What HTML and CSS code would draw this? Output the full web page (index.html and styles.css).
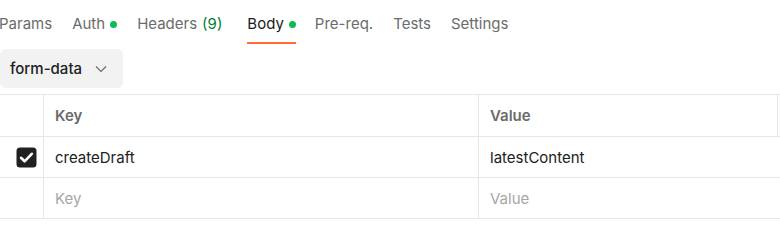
FILE: index.html
```html
<!DOCTYPE html>
<html lang="en">
<head>
    <meta charset="UTF-8">
    <title>Request Body</title>
    <link rel="stylesheet" href="styles.css">
</head>
<body>
    <div class="tabs">
        <div class="tab">Params</div>
        <div class="tab">Auth <span class="dot"></span></div>
        <div class="tab">Headers <span class="count">(9)</span></div>
        <div class="tab active">Body <span class="dot"></span></div>
        <div class="tab">Pre-req.</div>
        <div class="tab">Tests</div>
        <div class="tab">Settings</div>
    </div>

    <div class="body-type">
        <button class="type-select">
            form-data
            <svg width="12" height="8" viewBox="0 0 12 8"><path d="M1 1.5 L6 6.5 L11 1.5" fill="none" stroke="#6b6b6b" stroke-width="1.2"/></svg>
        </button>
    </div>

    <div class="table">
        <div class="row head">
            <div class="cell check"></div>
            <div class="cell">Key</div>
            <div class="cell last">Value</div>
        </div>
        <div class="row">
            <div class="cell check">
                <svg width="21" height="21" viewBox="0 0 21 21">
                    <rect x="0.5" y="0.5" width="20" height="20" rx="3.5" fill="#212121"/>
                    <path d="M5 10.8 L8.6 14.3 L15.8 6.8" fill="none" stroke="#fff" stroke-width="2.6" stroke-linecap="round" stroke-linejoin="round"/>
                </svg>
            </div>
            <div class="cell">createDraft</div>
            <div class="cell">latestContent</div>
        </div>
        <div class="row">
            <div class="cell check"></div>
            <div class="cell placeholder">Key</div>
            <div class="cell placeholder">Value</div>
        </div>
    </div>
</body>
</html>
```

FILE: styles.css
```css
body {
    margin: 0;
    font-family: Inter, "Noto Sans", sans-serif;
    font-size: 15px;
    color: #212121;
    background: #fff;
    overflow: hidden;
}

.tabs {
    display: flex;
    gap: 20px;
    height: 44px;
    margin-left: -1px;
}

.tab {
    display: flex;
    align-items: center;
    gap: 5px;
    color: #6b6b6b;
    border-bottom: 2px solid transparent;
    box-sizing: border-box;
    padding-top: 4px;
}

.tab.active {
    margin-left: 5px;
    margin-right: -1px;
    color: #212121;
    border-bottom-color: #ff6c37;
}

.dot {
    width: 7px;
    height: 7px;
    border-radius: 50%;
    background: #0cbb52;
    margin-top: 2px;
}

.count {
    color: #007f31;
}

.body-type {
    padding-top: 5px;
    height: 50px;
    box-sizing: border-box;
}

.type-select {
    display: flex;
    align-items: center;
    gap: 13px;
    width: 123px;
    height: 39px;
    padding: 0 0 0 10px;
    border: none;
    border-radius: 6px;
    background: #f2f2f2;
    font-family: inherit;
    font-size: 15px;
    font-weight: 500;
    color: #212121;
}

.table {
    border-top: 1px solid #e6e6e6;
}

.row {
    display: grid;
    grid-template-columns: 43px 435px 1fr;
    height: 40px;
    border-bottom: 1px solid #e6e6e6;
}

.row.head {
    height: 41px;
    font-weight: 600;
    color: #6b6b6b;
}

.cell {
    display: flex;
    align-items: center;
    padding-left: 11px;
    border-left: 1px solid #e6e6e6;
}

.cell.check {
    border-left: none;
    padding-left: 16px;
}

.row.head .last {
    border-right: 1px solid #e6e6e6;
    margin-right: 2px;
}

.placeholder {
    color: #a6a6a6;
}
```
